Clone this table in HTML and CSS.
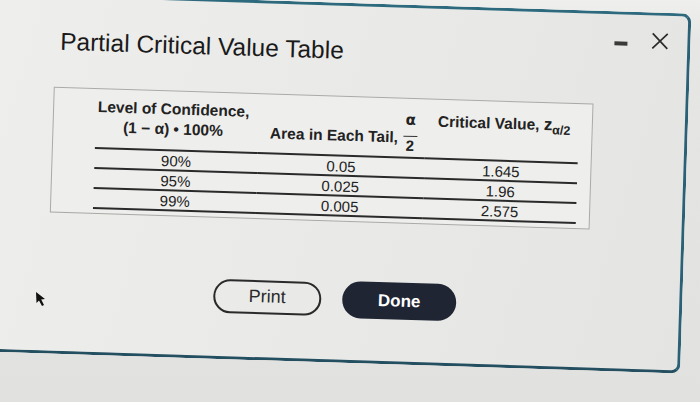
FILE: index.html
```html
<!DOCTYPE html>
<html>
<head>
<meta charset="utf-8">
<link rel="stylesheet" href="styles.css">
</head>
<body>
<div class="dialog">
  <div class="titlebar">
    <h1 class="title">Partial Critical Value Table</h1>
    <div class="controls">
      <span class="minimize"></span>
      <svg class="close" width="17" height="17" viewBox="0 0 17 17"><path d="M1 1 L16 16 M16 1 L1 16" stroke="#2b2b2b" stroke-width="1.7" fill="none"/></svg>
    </div>
  </div>
  <div class="tablebox">
    <div class="grid">
      <div class="h h1"><div>Level of Confidence,</div><div>(1 − α) • 100%</div></div>
      <div class="h h2"><span class="area">Area in Each Tail,</span><span class="frac"><span class="num">α</span><span class="den">2</span></span></div>
      <div class="h h3">Critical Value, <span class="z">z<sub>α/2</sub></span></div>
      <div class="c">90%</div><div class="c">0.05</div><div class="c">1.645</div>
      <div class="c">95%</div><div class="c">0.025</div><div class="c">1.96</div>
      <div class="c">99%</div><div class="c">0.005</div><div class="c">2.575</div>
    </div>
  </div>
  <div class="buttons">
    <button class="btn print">Print</button>
    <button class="btn done">Done</button>
  </div>
</div>
<svg class="cursor" width="11" height="16" viewBox="0 0 11 16"><path d="M1 1 L1.5 12 L4 9.5 L7 15 L9 14 L6.2 8.6 L10 8 Z" fill="#111"/></svg>
</body>
</html>
```
FILE: styles.css
```css
html, body {
  margin: 0;
  padding: 0;
}
body {
  position: relative;
  background: linear-gradient(180deg, #efefed 0px, #e6e6e4 40px, #e1e1df 100%);
  width: 700px;
  height: 402px;
  overflow: hidden;
  font-family: "Liberation Sans", Arial, sans-serif;
  color: #1e1e1e;
}
.dialog {
  box-sizing: border-box;
  width: 706px;
  height: 360px;
  margin-top: 3px;
  margin-left: -20px;
  background: linear-gradient(105deg, #eeeeec 0%, #e9e9e7 55%, #e4e4e2 100%);
  border-top: 3px solid #2d6a7e;
  border-right: 3px solid #2a6176;
  border-bottom: 3px solid #234f61;
  border-radius: 0 9px 9px 0;
  padding-top: 17px;
  transform: rotate(1.8deg);
  transform-origin: 370px 177px;
}
.titlebar {
  display: flex;
  align-items: flex-start;
  padding-left: 76px;
}
.title {
  margin: 14px 0 0 0;
  font-weight: normal;
  font-size: 24.5px;
  line-height: 28px;
  color: #1a1a1a;
  width: 554px;
}
.controls {
  display: flex;
  align-items: flex-start;
  gap: 24px;
}
.minimize {
  display: block;
  width: 13px;
  height: 4px;
  background: #3a3a3a;
  margin-top: 10px;
}
.close {
  display: block;
}
.tablebox {
  margin-top: 31px;
  margin-left: 71px;
  width: 540px;
  box-sizing: border-box;
  border: 1px solid #a9a9a7;
  background: #eeeeec;
  padding: 8px 13px 4px 42px;
}
.grid {
  display: grid;
  grid-template-columns: 163px 167px 153px;
}
.h {
  font-weight: bold;
  font-size: 15.5px;
  line-height: 20px;
  color: #222;
  border-bottom: 2px solid #2a2a2a;
}
.h1 {
  text-align: center;
  padding-right: 8px;
  padding-bottom: 10px;
}
.h2 {
  display: flex;
  align-items: flex-end;
  justify-content: flex-end;
  gap: 5px;
  padding-right: 8px;
}
.area {
  line-height: 18px;
  margin-bottom: 10px;
  white-space: nowrap;
}
.frac {
  display: inline-flex;
  flex-direction: column;
  align-items: center;
  font-size: 15px;
  line-height: 16px;
  margin-bottom: 3px;
  margin-top: 5px;
}
.num {
  font-family: "DejaVu Sans", sans-serif;
  font-weight: bold;
  font-size: 15px;
  border-bottom: 1.5px solid #333;
  padding: 0 2px 8px;
}
.den {
  padding-top: 1px;
}
.h3 {
  padding-left: 12px;
  padding-top: 4px;
  white-space: nowrap;
  line-height: 20px;
}
.z {
  font-size: 17px;
}
.z sub {
  font-size: 12.5px;
  line-height: 0;
  vertical-align: -4px;
}
.c {
  font-size: 15px;
  line-height: 17px;
  padding-top: 1px;
  height: 17px;
  color: #222;
  border-bottom: 2px solid #2a2a2a;
  text-align: center;
}
.buttons {
  display: flex;
  gap: 21px;
  margin-top: 59px;
  padding-left: 237px;
  align-items: center;
}
.btn {
  font-family: "Liberation Sans", Arial, sans-serif;
  padding: 0;
  cursor: default;
  box-sizing: border-box;
}
.print {
  width: 108px;
  height: 34px;
  border-radius: 17px;
  font-size: 18px;
  background: transparent;
  border: 2px solid #2a2a2a;
  color: #2a2a2a;
}
.done {
  width: 114px;
  height: 37px;
  border-radius: 19px;
  font-size: 17px;
  background: #1f2533;
  border: none;
  color: #fff;
  font-weight: bold;
}
.cursor {
  position: absolute;
  left: 35px;
  top: 291px;
}
```
